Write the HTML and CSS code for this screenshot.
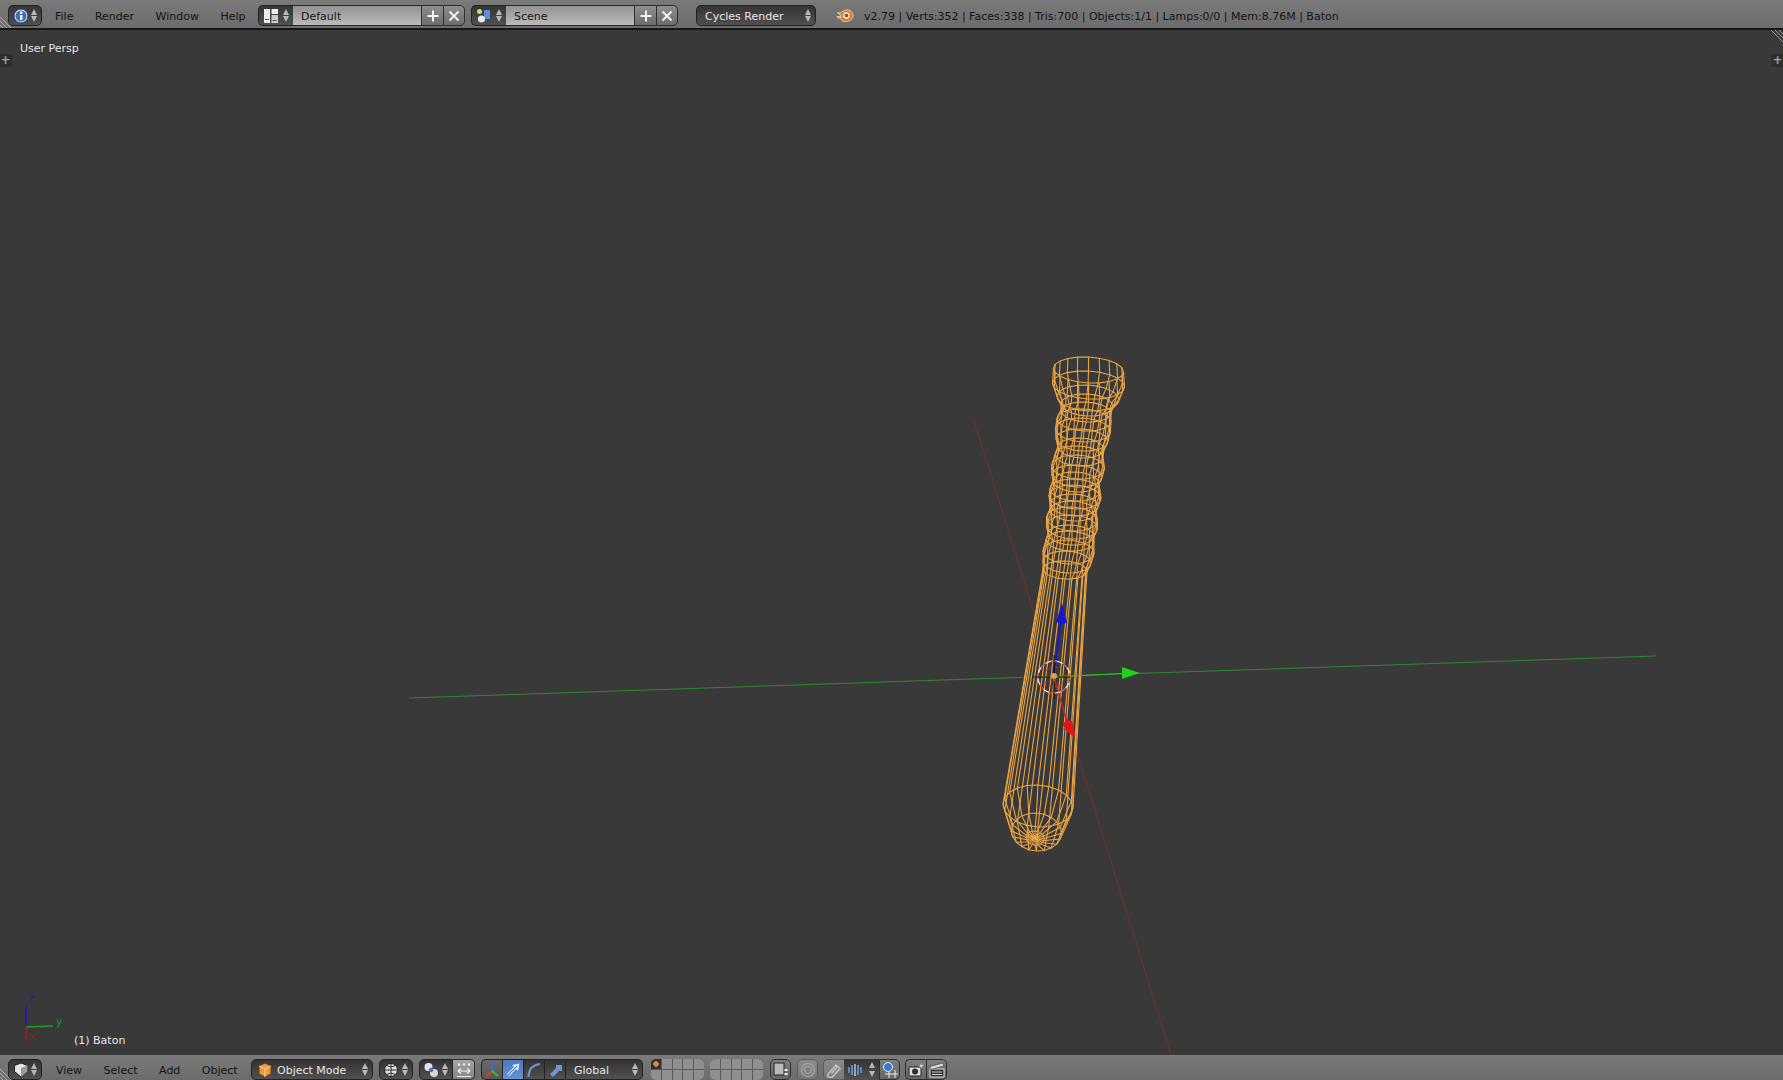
FILE: index.html
```html
<!DOCTYPE html>
<html lang="en">
<head>
    <meta charset="UTF-8">
    <title>Blender</title>
    <link rel="stylesheet" href="styles.css">
</head>
<body>
    <header class="bar bar-top">
        <svg class="hatch" viewBox="0 0 13 13"><path d="M0 2l11 11M0 6l7 7M0 10l3 3" stroke="#b0b0b0" stroke-width="1"/></svg>
        <div class="btn-dark editor-btn arrows">
            <svg class="icon" viewBox="0 0 16 16"><circle cx="8" cy="8" r="7" fill="#dfe7f5" stroke="#25406e"/><circle cx="8" cy="8" r="5.5" fill="#3f6fb5"/><rect x="7" y="7" width="2.4" height="5" fill="#fff"/><rect x="7" y="3.6" width="2.4" height="2.2" fill="#fff"/></svg>
        </div>
        <nav class="menu menu-top">
            <span>File</span>
            <span>Render</span>
            <span>Window</span>
            <span>Help</span>
        </nav>
        <div class="id-group">
            <div class="btn-dark id-btn arrows">
                <svg class="icon" viewBox="0 0 16 16"><rect x="1" y="1" width="6" height="14" fill="#eee"/><rect x="8.5" y="1" width="6.5" height="5" fill="#eee"/><rect x="8.5" y="7" width="6.5" height="8" fill="#ccc"/><rect x="2" y="11" width="4" height="1" fill="#555"/><rect x="9.5" y="12" width="4" height="1" fill="#555"/></svg>
            </div>
            <div class="field">Default</div>
            <div class="btn-grey"><svg class="glyph" viewBox="0 0 14 14"><path d="M7 1.5v11M1.5 7h11" stroke="#f2f2f2" stroke-width="2"/></svg></div>
            <div class="btn-grey end"><svg class="glyph" viewBox="0 0 14 14"><path d="M2.5 2.5l9 9M11.5 2.5l-9 9" stroke="#f2f2f2" stroke-width="2"/></svg></div>
        </div>
        <div class="id-group scene-group">
            <div class="btn-dark id-btn arrows">
                <svg class="icon" viewBox="0 0 16 16"><circle cx="3.5" cy="3.5" r="2.5" fill="#d8d86a"/><rect x="8" y="2" width="6" height="9" rx="1" fill="#5c8fd6"/><circle cx="5.5" cy="11" r="3.6" fill="#e8e8e8"/></svg>
            </div>
            <div class="field">Scene</div>
            <div class="btn-grey"><svg class="glyph" viewBox="0 0 14 14"><path d="M7 1.5v11M1.5 7h11" stroke="#f2f2f2" stroke-width="2"/></svg></div>
            <div class="btn-grey end"><svg class="glyph" viewBox="0 0 14 14"><path d="M2.5 2.5l9 9M11.5 2.5l-9 9" stroke="#f2f2f2" stroke-width="2"/></svg></div>
        </div>
        <div class="btn-dark dropdown engine arrows">Cycles Render</div>
        <svg class="blender-logo" viewBox="0 0 18 16"><path d="M1 9.5l5-.2L1.500 5.800h3.200L8 3.500C12 1.500 17 4 17 8.500S12 15 8.500 14.500 4.500 12 4.500 10.500L2.500 11.500z" fill="#e87d0d" stroke="#fff" stroke-width=".6"/><circle cx="10.500" cy="8.500" r="3.200" fill="#fff"/><circle cx="10.500" cy="8.500" r="2" fill="#2f6fb0"/></svg>
        <div class="stats">v2.79 | Verts:352 | Faces:338 | Tris:700 | Objects:1/1 | Lamps:0/0 | Mem:8.76M | Baton</div>
    </header>

    <main class="viewport">
        <div class="view-name">User Persp</div>
        <div class="object-name">(1) Baton</div>
        <svg class="scene" viewBox="0 30 1783 1025">
            <line x1="409" y1="698" x2="1656" y2="656" stroke="#2c8a2c"/>
            <line x1="974" y1="420" x2="1171" y2="1055" stroke="#7c2c2c"/>
            <g id="baton" fill="none" stroke="#eba545" stroke-width="1.100"></g>

            <!-- transform gizmo -->
            <line x1="1054" y1="677" x2="1130" y2="673" stroke="#22c822" stroke-width="1"/>
            <path d="M1122 667l18 6-18 6z" fill="#1fd01f"/>
            <line x1="1054" y1="677" x2="1061" y2="618" stroke="#1717c8" stroke-width="2"/>
            <path d="M1062 603l-6 19 5 2 6-1z" fill="#1616d2"/>
            <line x1="1054" y1="677" x2="1067" y2="722" stroke="#d01e1e" stroke-width="1.500"/>
            <path d="M1066 720l6 1 3 12-1 4-8-6-3-7z" fill="#e01616"/>

            <!-- 3d cursor -->
            <circle cx="1054" cy="677" r="16" fill="none" stroke="#fff" stroke-width="1.200"/>
            <circle cx="1054" cy="677" r="16" fill="none" stroke="#d82020" stroke-width="1.200" stroke-dasharray="6 6"/>
            <circle cx="1054" cy="677" r="10" fill="none" stroke="#c83030" stroke-dasharray="3 3"/>
            <path d="M1032 677h18M1058 677h12M1054 655v18M1054 681v18" stroke="#111" stroke-width="1"/>
            <circle cx="1054" cy="676" r="3" fill="#e0a050"/>

            <!-- axis widget -->
            <line x1="26" y1="1027" x2="26" y2="1005" stroke="#1a1ac0" stroke-width="1.500"/>
            <line x1="26" y1="1027" x2="53" y2="1026" stroke="#1fa01f" stroke-width="1.500"/>
            <line x1="26" y1="1027" x2="26" y2="1041" stroke="#a01a1a" stroke-width="1.500"/>
            <text x="28" y="1002" class="axis-label" fill="#22229a">z</text>
            <text x="56" y="1025" class="axis-label" fill="#1f9a1f">y</text>
            <text x="29" y="1040" class="axis-label" fill="#8a2222">x</text>

            <!-- area corner hatch -->
            <path d="M1771 30l12 12M1775 30l8 8M1779 30l4 4" stroke="#9a9a9a" stroke-width="1"/>
        </svg>
        <div class="region-plus left">+</div>
        <div class="region-plus right">+</div>
    </main>

    <footer class="bar bar-bottom">
        <svg class="hatch" viewBox="0 0 13 13"><path d="M0 2l11 11M0 6l7 7M0 10l3 3" stroke="#b0b0b0" stroke-width="1"/></svg>
        <div class="btn-dark editor-btn arrows">
            <svg class="icon" viewBox="0 0 16 16"><path d="M8 1l6.500 2.500v6L8 15 1.500 9.500v-6z" fill="#e6e6e6" stroke="#222"/><path d="M8 6l6.500-2.500v6L8 15z" fill="#9a9a9a"/></svg>
        </div>
        <nav class="menu menu-bottom">
            <span>View</span>
            <span>Select</span>
            <span>Add</span>
            <span>Object</span>
        </nav>
        <div class="btn-dark dropdown mode arrows">
            <svg class="icon" viewBox="0 0 16 16"><path d="M8 1l6 3v8l-6 3-6-3V4z" fill="#e8993f" stroke="#6a3b0c"/><path d="M2 4l6 3 6-3M8 7v8" fill="none" stroke="#ffd9a3"/></svg>
            Object Mode
        </div>
        <div class="btn-dark pivot-shade arrows">
            <svg class="icon" viewBox="0 0 16 16"><circle cx="8" cy="8" r="6.500" fill="#ddd" stroke="#222"/><path d="M1.500 8h13M8 1.500v13M3.500 3.500q4.500 3 9 0M3.500 12.500q4.500-3 9 0" fill="none" stroke="#333"/></svg>
        </div>
        <div class="pivot-group">
            <div class="btn-dark pivot arrows">
                <svg class="icon" viewBox="0 0 16 16"><circle cx="5.500" cy="5" r="4" fill="#e4e4e4"/><circle cx="11" cy="11" r="4" fill="#d8d8d8"/><circle cx="8" cy="8" r="2.200" fill="#3c78d0"/></svg>
            </div>
            <div class="btn-light">
                <svg class="icon" viewBox="0 0 16 16"><circle cx="3" cy="2.500" r="1.200" fill="#eee"/><circle cx="8" cy="2.500" r="1.200" fill="#eee"/><circle cx="13" cy="2.500" r="1.200" fill="#eee"/><path d="M2 9h12M2 9l3-2.500M2 9l3 2.500M14 9l-3-2.500M14 9l-3 2.500M1 14.500h14" fill="none" stroke="#f2f2f2" stroke-width="1.200"/></svg>
            </div>
        </div>
        <div class="manipulator">
            <div class="tool">
                <svg class="icon" viewBox="0 0 16 16"><path d="M8 9V1" stroke="#2f6fe0" stroke-width="2"/><path d="M8 9l-6 5" stroke="#e03a2a" stroke-width="2"/><path d="M8 9l6 5" stroke="#3fb53f" stroke-width="2"/></svg>
            </div>
            <div class="tool active">
                <svg class="icon" viewBox="0 0 16 16"><path d="M3 13L12 4" stroke="#dce8fa" stroke-width="3"/><path d="M14.500 1.500L7 3l6 6z" fill="#dce8fa"/><path d="M3 13L12 4" stroke="#2f62b5" stroke-width="1"/></svg>
            </div>
            <div class="tool">
                <svg class="icon" viewBox="0 0 16 16"><path d="M2.500 15C2.500 8 6.500 3 14 2" fill="none" stroke="#6f97c8" stroke-width="2"/></svg>
            </div>
            <div class="tool">
                <svg class="icon" viewBox="0 0 16 16"><path d="M3 14L9 8V5h6v6h-3l-6 6z" fill="#6f97c8" transform="translate(0 -2)"/></svg>
            </div>
            <div class="manip-select arrows">Global</div>
        </div>
        <div class="layers">
            <i class="on"></i><i></i><i></i><i></i><i></i>
            <i></i><i></i><i></i><i></i><i></i>
        </div>
        <div class="layers second">
            <i></i><i></i><i></i><i></i><i></i>
            <i></i><i></i><i></i><i></i><i></i>
        </div>
        <div class="btn-round lock">
            <svg class="icon" viewBox="0 0 16 16"><rect x="1" y="1" width="10" height="12" fill="#b8b8b8" stroke="#222"/><path d="M13 7v2M13 11v2" stroke="#eee" stroke-width="3"/></svg>
        </div>
        <div class="btn-round prop">
            <svg class="icon" viewBox="0 0 16 16"><circle cx="8" cy="8" r="6.500" fill="none" stroke="#a8a8a8" stroke-width="1.200"/><circle cx="8" cy="8" r="3.500" fill="none" stroke="#a8a8a8" stroke-width="1.200"/></svg>
        </div>
        <div class="snap-group">
            <div class="btn-round snap">
                <svg class="icon" viewBox="0 0 16 16"><path d="M3 11l7-8 4 3.500-7 8C3 17 0 14 3 11zM5.500 11.500L11 5.500" fill="none" stroke="#c4c4c4" stroke-width="1.500"/></svg>
            </div>
            <div class="snap-type arrows">
                <svg class="icon" viewBox="0 0 16 16"><path d="M8 2v12" stroke="#fff"/><path d="M2 5v6M5 3v10M11 3v10M14 5v6" stroke="#6aa0e8" stroke-width="1.500"/></svg>
            </div>
            <div class="btn-round snap-target">
                <svg class="icon" viewBox="0 0 16 16"><path d="M7 8v8M13 8v8M3 12h13" stroke="#eee"/><circle cx="6" cy="5" r="4.500" fill="#3c78d0" stroke="#eee"/></svg>
            </div>
        </div>
        <div class="render-group">
            <div class="btn-round render">
                <svg class="icon" viewBox="0 0 16 16"><rect x="1" y="5" width="12" height="9" rx="1" fill="#ddd" stroke="#222"/><circle cx="7" cy="9.500" r="3" fill="#333"/><path d="M13 1l.8 2 2.200.5-2 1L13.500 7l-1-2.300-2-.7 2-.8z" fill="#f0e070"/></svg>
            </div>
            <div class="btn-round anim">
                <svg class="icon" viewBox="0 0 16 16"><rect x="1" y="7" width="14" height="8" fill="#333" stroke="#ddd"/><path d="M1 4.500L14 1l.8 3L1.500 7.500z" fill="#ddd" stroke="#222" stroke-width=".5"/><path d="M3 10h10M3 12.500h10" stroke="#ccc"/></svg>
            </div>
        </div>
    </footer>

    <script src="baton.js"></script>
</body>
</html>
```

FILE: styles.css
```css
* {
    box-sizing: border-box;
}
html, body {
    height: 100%;
}
body {
    margin: 0;
    display: flex;
    flex-direction: column;
    overflow: hidden;
    background-color: #393939;
    font-family: "DejaVu Sans", sans-serif;
    font-size: 11px;
    color: #111;
}
.bar {
    position: relative;
    display: flex;
    align-items: flex-start;
    flex: none;
    overflow: hidden;
    background: linear-gradient(#7a7a7a, #6c6c6c);
    white-space: nowrap;
}
.bar-top {
    height: 30px;
    padding: 5px 0 0 8px;
    border-bottom: 2px solid #161616;
}
.bar-bottom {
    height: 25px;
    padding: 4px 0 0 8px;
}
.hatch {
    position: absolute;
    bottom: 0;
    left: 0;
    width: 13px;
    height: 13px;
}
.btn-dark {
    position: relative;
    display: flex;
    align-items: center;
    height: 21px;
    background: linear-gradient(#343434, #505050);
    border: 1px solid #222;
    border-radius: 5px;
    color: #e6e6e6;
}
.icon {
    width: 16px;
    height: 16px;
    flex: none;
}
.arrows::before,
.arrows::after {
    content: "";
    position: absolute;
    right: 4px;
    border-left: 3px solid transparent;
    border-right: 3px solid transparent;
}
.arrows::before {
    top: 3px;
    border-bottom: 6px solid #b8b8b8;
}
.arrows::after {
    bottom: 3px;
    border-top: 6px solid #b8b8b8;
}
.editor-btn {
    width: 34px;
    padding-left: 4px;
}
.menu {
    display: flex;
    height: 23px;
    align-items: center;
}
.menu-top {
    width: 216px;
    padding-left: 13px;
    gap: 21.5px;
}
.menu-bottom {
    width: 209px;
    padding-left: 14px;
    gap: 21.5px;
}
.menu span {
    color: #141414;
}
.id-group {
    display: flex;
    height: 21px;
}
.scene-group {
    margin-left: 6px;
}
.id-btn {
    width: 35px;
    padding-left: 4px;
    border-radius: 5px 0 0 5px;
    border-right: 0;
}
.field {
    width: 128px;
    height: 21px;
    padding: 0 8px;
    line-height: 21px;
    background: linear-gradient(#929292, #bababa);
    border: 1px solid #2a2a2a;
    border-left: 0;
    border-right: 0;
    color: #161616;
}
.btn-grey {
    display: flex;
    align-items: center;
    justify-content: center;
    width: 22px;
    height: 21px;
    background: linear-gradient(#8e8e8e, #6c6c6c);
    border: 1px solid #2e2e2e;
    border-right: 0;
}
.btn-grey.end {
    border-right: 1px solid #2e2e2e;
    border-radius: 0 5px 5px 0;
}
.glyph {
    width: 14px;
    height: 14px;
}
.dropdown {
    padding-left: 8px;
    padding-top: 1px;
}
.engine {
    width: 120px;
    margin-left: 18px;
}
.blender-logo {
    width: 18px;
    height: 16px;
    margin: 2px 0 0 20px;
    flex: none;
}
.stats {
    height: 23px;
    margin-left: 10px;
    line-height: 23px;
    color: #141414;
}
.viewport {
    position: relative;
    flex: 1;
    background-color: #393939;
}
.scene {
    position: absolute;
    top: 0;
    left: 0;
    width: 1783px;
    height: 1025px;
}
.axis-label {
    font-size: 11px;
}
.view-name {
    position: absolute;
    top: 12px;
    left: 20px;
    color: #e6e6e6;
}
.object-name {
    position: absolute;
    top: 1004px;
    left: 74px;
    color: #e6e6e6;
}
.region-plus {
    position: absolute;
    top: 24px;
    width: 13px;
    height: 13px;
    background-color: #2e2e2e;
    border-radius: 3px;
    color: #a0a0a0;
    font-weight: bold;
    font-size: 12px;
    line-height: 13px;
    text-align: center;
}
.region-plus.left {
    left: -1px;
}
.region-plus.right {
    right: -1px;
}
.mode {
    width: 122px;
    gap: 4px;
    padding-left: 5px;
}
.pivot-shade {
    width: 34px;
    margin-left: 6px;
    padding-left: 3px;
}
.pivot-group {
    display: flex;
    margin-left: 6px;
}
.pivot {
    width: 34px;
    padding-left: 3px;
    border-radius: 5px 0 0 5px;
}
.btn-light {
    display: flex;
    align-items: center;
    justify-content: center;
    width: 22px;
    height: 21px;
    background: linear-gradient(#a6a6a6, #848484);
    border: 1px solid #2e2e2e;
    border-left: 0;
    border-radius: 0 5px 5px 0;
}
.manipulator {
    display: flex;
    height: 21px;
    margin-left: 6px;
}
.tool {
    display: flex;
    align-items: center;
    justify-content: center;
    width: 21px;
    height: 21px;
    background: linear-gradient(#343434, #505050);
    border: 1px solid #222;
    border-right: 0;
}
.tool:first-child {
    border-radius: 5px 0 0 5px;
    background: linear-gradient(#6a6a6a, #585858);
}
.tool.active {
    background: linear-gradient(#4a78bf, #6a93d4);
}
.manip-select {
    position: relative;
    width: 78px;
    height: 21px;
    padding-left: 8px;
    line-height: 21px;
    background: linear-gradient(#343434, #505050);
    border: 1px solid #222;
    border-radius: 0 5px 5px 0;
    color: #e6e6e6;
}
.layers {
    display: grid;
    grid-template-columns: repeat(5, 1fr);
    grid-auto-rows: 10px;
    gap: 1px;
    width: 53px;
    height: 21px;
    margin-left: 8px;
    overflow: hidden;
    border-radius: 5px;
    background-color: #5a5a5a;
}
.layers.second {
    margin-left: 6px;
}
.layers i {
    background-color: #8f8f8f;
}
.layers i.on {
    background: radial-gradient(circle, #e08a30 0 2.500px, #2f2f2f 3px);
}
.btn-round {
    display: flex;
    align-items: center;
    justify-content: center;
    width: 21px;
    height: 21px;
    background: linear-gradient(#7e7e7e, #666);
    border: 1px solid #2e2e2e;
    border-radius: 5px;
}
.lock {
    margin-left: 7px;
}
.prop {
    margin-left: 6px;
    background: linear-gradient(#8a8a8a, #777);
    border-color: #5c5c5c;
}
.snap-group {
    display: flex;
    margin-left: 5px;
}
.snap {
    background: linear-gradient(#8a8a8a, #777);
    border-color: #5c5c5c;
    border-radius: 5px 0 0 5px;
    border-right: 0;
}
.snap-type {
    position: relative;
    display: flex;
    align-items: center;
    width: 35px;
    height: 21px;
    padding-left: 3px;
    background: linear-gradient(#343434, #505050);
}
.snap-target {
    border-radius: 0 5px 5px 0;
}
.render-group {
    display: flex;
    margin-left: 5px;
}
.render {
    border-radius: 5px 0 0 5px;
    border-right: 0;
}
.anim {
    border-radius: 0 5px 5px 0;
}
```

FILE: baton.js
```js
// wireframe of the baton, [center x, center y, radius x, radius y] per ring
const rings = [
    [1088.5, 370, 35, 13],
    [1088.5, 385, 36, 14],
    [1088, 398, 31, 13],
    [1087, 405, 26, 11],
    [1086, 412, 25, 10],
    [1084, 420, 27, 11],
    [1083, 430, 27.5, 12],
    [1082, 440, 26, 11],
    [1081, 448, 23, 10],
    [1079, 456, 24, 10],
    [1078, 467, 26.5, 12],
    [1077, 476, 25, 11],
    [1076, 482, 23, 10],
    [1075, 490, 25, 11],
    [1075, 497, 26, 12],
    [1074, 505, 24, 11],
    [1073, 511, 23, 10],
    [1072, 519, 25.5, 12],
    [1072, 527, 25.5, 12],
    [1071, 535, 23, 10],
    [1070, 541, 24, 10],
    [1068.5, 552, 25.5, 12],
    [1067, 562, 24, 11],
    [1065, 570, 22, 9],
    [1038, 806, 35, 21],
    [1036.5, 832, 25, 19],
    [1035, 838, 9, 7],
    [1035, 838, 0.5, 0.5]
];
const SEGMENTS = 20;
const TILT = 0.05;
const baton = document.getElementById('baton');

function point(ring, i) {
    const a = i / SEGMENTS * Math.PI * 2;
    const x = ring[2] * Math.cos(a);
    const y = ring[3] * Math.sin(a);
    return (ring[0] + x).toFixed(1) + ',' + (ring[1] + y + x * TILT).toFixed(1);
}

function addLine(points) {
    const line = document.createElementNS('http://www.w3.org/2000/svg', 'polyline');
    line.setAttribute('points', points.join(' '));
    baton.appendChild(line);
}

rings.forEach(ring => {
    const points = [];
    for (let i = 0; i <= SEGMENTS; i++) {
        points.push(point(ring, i));
    }
    addLine(points);
});

for (let i = 0; i < SEGMENTS; i++) {
    addLine(rings.map(ring => point(ring, i)));
}
```
